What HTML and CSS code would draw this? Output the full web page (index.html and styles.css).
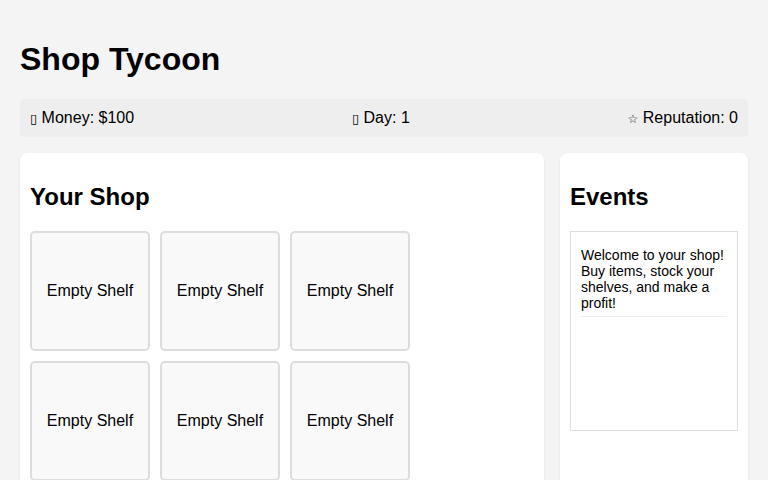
FILE: index.html
```html
<!DOCTYPE html>
<html lang="en">
<head>
  <meta charset="UTF-8" />
  <meta name="viewport" content="width=device-width, initial-scale=1.0" />
  <title>Shop Tycoon</title>
  <link rel="stylesheet" href="styles.css">
</head>
<body>
  <h1>Shop Tycoon</h1>
  <div class="stats-bar">
    <span><span class="icon">▯</span> Money: $<span id="money">100</span></span>
    <span><span class="icon">▯</span> Day: <span id="day">1</span></span>
    <span><span class="icon star">☆</span> Reputation: <span id="rep">0</span></span>
  </div>
  <div class="main">
    <div class="panel shop">
      <h2>Your Shop</h2>
      <div class="shelves">
        <div class="shelf">Empty Shelf</div>
        <div class="shelf">Empty Shelf</div>
        <div class="shelf">Empty Shelf</div>
        <div class="shelf">Empty Shelf</div>
        <div class="shelf">Empty Shelf</div>
        <div class="shelf">Empty Shelf</div>
      </div>
    </div>
    <div class="panel events">
      <h2>Events</h2>
      <div class="event-log">
        <div class="event">Welcome to your shop! Buy items, stock your shelves, and make a profit!</div>
      </div>
    </div>
  </div>
</body>
</html>
```

FILE: styles.css
```css
body {
  font-family: "Liberation Sans", Arial, sans-serif;
  background: #f4f4f4;
  margin: 0;
  padding: 20px;
  color: #000;
}
h1 {
  font-size: 32px;
  margin: 21px 0;
}
.stats-bar {
  display: flex;
  justify-content: space-between;
  background: #eee;
  padding: 10px;
  border-radius: 5px;
  margin-bottom: 16px;
  font-size: 16px;
  line-height: 18px;
}
.icon {
  font-family: "DejaVu Sans", sans-serif;
  font-size: 13px;
  line-height: 1;
}
.star {
  font-size: 12px;
  color: #222;
}
.main {
  display: flex;
  gap: 16px;
}
.panel {
  background: #fff;
  border-radius: 8px;
  padding: 10px;
  box-shadow: 0 2px 4px rgba(0,0,0,0.06);
}
.panel h2 {
  font-size: 24px;
  margin: 20px 0;
}
.shop {
  flex: 1;
}
.events {
  width: 168px;
  flex-shrink: 0;
}
.shelves {
  display: grid;
  grid-template-columns: repeat(auto-fill, 120px);
  gap: 10px;
}
.shelf {
  width: 120px;
  height: 120px;
  box-sizing: border-box;
  border: 2px solid #ddd;
  border-radius: 5px;
  background: #f9f9f9;
  display: flex;
  align-items: center;
  justify-content: center;
  font-size: 16px;
}
.event-log {
  height: 200px;
  box-sizing: border-box;
  border: 1px solid #ddd;
  padding: 10px;
  overflow-y: auto;
}
.event {
  font-size: 14px;
  padding: 5px 0;
  border-bottom: 1px solid #eee;
}
```
